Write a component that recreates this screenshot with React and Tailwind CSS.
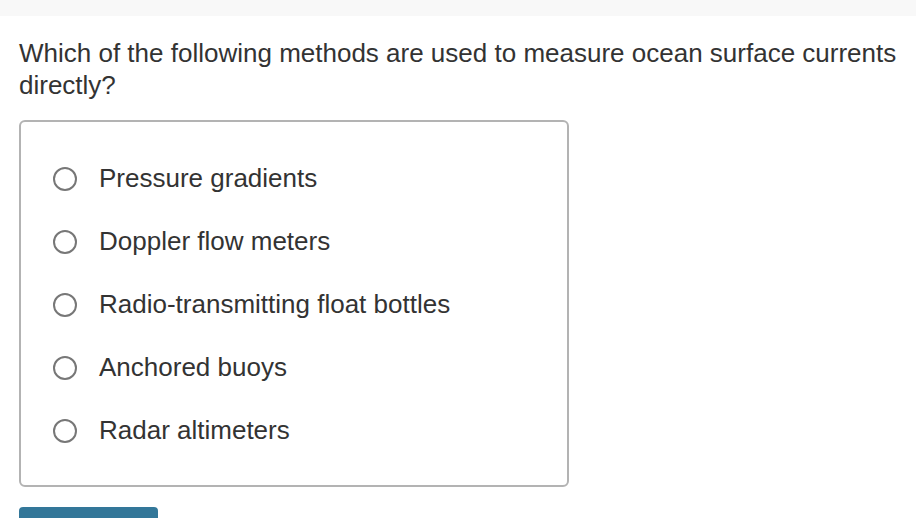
import React from "react";

const options = [
  "Pressure gradients",
  "Doppler flow meters",
  "Radio-transmitting float bottles",
  "Anchored buoys",
  "Radar altimeters",
];

export default function App() {
  return (
    <div className="w-[916px] h-[518px] overflow-hidden bg-white text-[#333333]" style={{ fontFamily: '"Liberation Sans", Arial, sans-serif' }}>
      <div className="h-[16px] bg-[#f8f8f8]" />
      <div className="px-[19px] pt-[21px]">
        <p className="text-[26px] leading-[32px] m-0">
          Which of the following methods are used to measure ocean surface currents directly?
        </p>
        <div className="mt-[19px] w-[550px] h-[367px] border-2 border-[#b3b3b3] rounded-[6px] pt-[25px]">
          {options.map((o) => (
            <div key={o} className="flex items-center h-[63px]">
              <span className="ml-[32px] w-[24px] h-[24px] rounded-full border-2 border-[#777777] bg-white" />
              <span className="ml-[22px] text-[26px]">{o}</span>
            </div>
          ))}
        </div>
        <div className="mt-[20px] w-[139px] h-[20px] rounded-t-[4px] bg-[#337799]" />
      </div>
    </div>
  );
}
